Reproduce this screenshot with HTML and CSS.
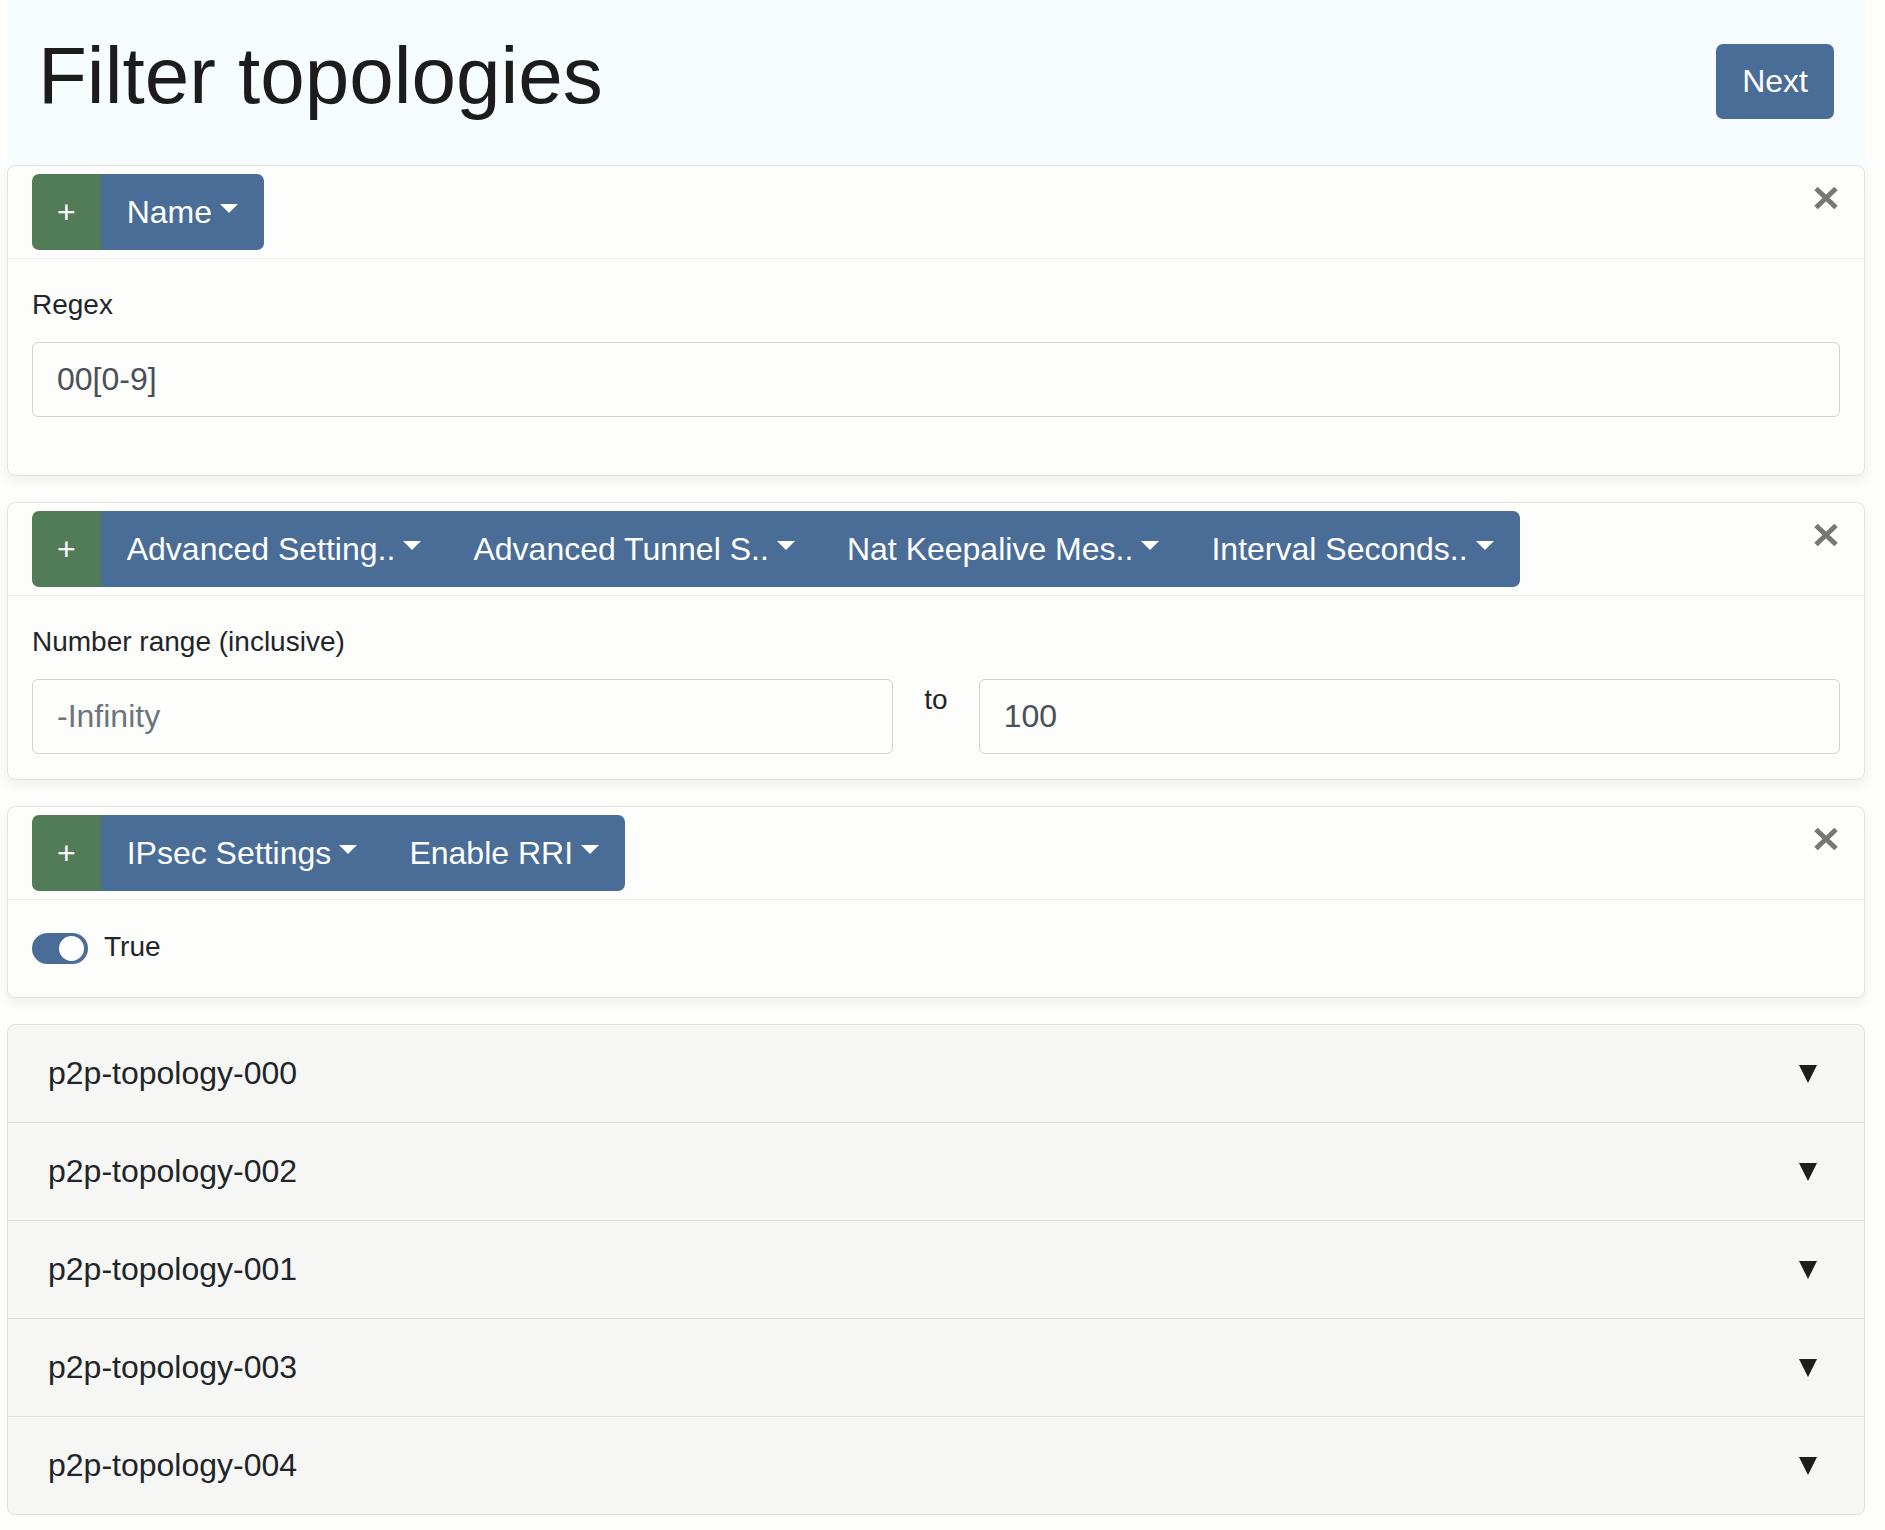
FILE: index.html
```html
<!DOCTYPE html>
<html lang="en">
<head>
<meta charset="utf-8">
<title>Filter topologies</title>
<link rel="stylesheet" href="styles.css">
</head>
<body>
<div class="page">
  <header class="header">
    <h1 class="title">Filter topologies</h1>
    <button class="next-btn">Next</button>
  </header>

  <section class="card">
    <div class="card-head">
      <div class="btn-group">
        <span class="btn btn-add">+</span>
        <span class="btn btn-dd">Name<i class="caret"></i></span>
      </div>
      <span class="close"><svg viewBox="0 0 26 24" width="26" height="24"><path d="M3 2.5 L23 21.5 M23 2.5 L3 21.5" stroke="#777" stroke-width="5" fill="none"/></svg></span>
    </div>
    <div class="card-body">
      <div class="form-group">
        <label class="label">Regex</label>
        <input class="input" type="text" value="00[0-9]">
      </div>
    </div>
  </section>

  <section class="card">
    <div class="card-head">
      <div class="btn-group">
        <span class="btn btn-add">+</span>
        <span class="btn btn-dd">Advanced Setting..<i class="caret"></i></span>
        <span class="btn btn-dd">Advanced Tunnel S..<i class="caret"></i></span>
        <span class="btn btn-dd">Nat Keepalive Mes..<i class="caret"></i></span>
        <span class="btn btn-dd">Interval Seconds..<i class="caret"></i></span>
      </div>
      <span class="close"><svg viewBox="0 0 26 24" width="26" height="24"><path d="M3 2.5 L23 21.5 M23 2.5 L3 21.5" stroke="#777" stroke-width="5" fill="none"/></svg></span>
    </div>
    <div class="card-body">
      <label class="label">Number range (inclusive)</label>
      <div class="range">
        <input class="input" type="text" placeholder="-Infinity">
        <span class="to">to</span>
        <input class="input" type="text" value="100">
      </div>
    </div>
  </section>

  <section class="card">
    <div class="card-head">
      <div class="btn-group">
        <span class="btn btn-add">+</span>
        <span class="btn btn-dd">IPsec Settings<i class="caret"></i></span>
        <span class="btn btn-dd">Enable RRI<i class="caret"></i></span>
      </div>
      <span class="close"><svg viewBox="0 0 26 24" width="26" height="24"><path d="M3 2.5 L23 21.5 M23 2.5 L3 21.5" stroke="#777" stroke-width="5" fill="none"/></svg></span>
    </div>
    <div class="card-body card-body-switch">
      <div class="switch-row">
        <span class="switch"><span class="knob"></span></span>
        <span class="switch-label">True</span>
      </div>
    </div>
  </section>

  <ul class="list">
    <li class="item"><span>p2p-topology-000</span><i class="tri"></i></li>
    <li class="item"><span>p2p-topology-002</span><i class="tri"></i></li>
    <li class="item"><span>p2p-topology-001</span><i class="tri"></i></li>
    <li class="item"><span>p2p-topology-003</span><i class="tri"></i></li>
    <li class="item"><span>p2p-topology-004</span><i class="tri"></i></li>
  </ul>
</div>
</body>
</html>
```

FILE: styles.css
```css
html, body {
  margin: 0;
  padding: 0;
  background: #fdfdfc;
}

body {
  font-family: "Liberation Sans", Arial, sans-serif;
  font-size: 28px;
  line-height: 42px;
  color: #212529;
}

.page {
  margin-left: 6px;
  width: 1861px;
}

.header {
  background: #f7fcfe;
  display: flex;
  justify-content: space-between;
  align-items: flex-start;
  padding: 27px 33px 41px 32px;
}

.title {
  margin: 0;
  font-size: 80px;
  line-height: 97px;
  font-weight: 400;
  color: #1b1c1b;
}

.next-btn {
  margin-top: 17px;
  height: 75px;
  padding: 0 26px;
  border: none;
  border-radius: 7px;
  background: #4a6d97;
  color: #fff;
  font-family: "Liberation Sans", Arial, sans-serif;
  font-size: 32px;
}

.card {
  position: relative;
  margin: 0 2px 26px 1px;
  border: 1px solid #e4e5e2;
  border-radius: 8px;
  background: #fdfdfc;
  box-shadow: 0 5px 12px rgba(0, 0, 0, 0.06);
}

.card-head {
  position: relative;
  padding: 8px 24px 8px;
  border-bottom: 1px solid #efefed;
}

.btn-group {
  display: inline-flex;
  border-radius: 7px;
  overflow: hidden;
  vertical-align: top;
}

.btn {
  display: flex;
  align-items: center;
  height: 76px;
  padding: 0 26px;
  font-size: 32px;
  line-height: 48px;
  color: #fff;
  white-space: nowrap;
}

.btn-add {
  padding: 0 25px;
  background: #527b58;
}

.btn-dd {
  background: #4a6d97;
}

.caret {
  display: inline-block;
  margin-left: 0.255em;
  margin-bottom: 0.2em;
  border-top: 0.3em solid #fff;
  border-left: 0.3em solid transparent;
  border-right: 0.3em solid transparent;
}

.close {
  position: absolute;
  top: 20px;
  right: 25px;
  width: 26px;
  height: 24px;
  line-height: 0;
}

.card-body {
  padding: 25px 24px 25px;
}

.form-group {
  margin-bottom: 33px;
}

.label {
  display: block;
  font-size: 28px;
  line-height: 42px;
  margin-bottom: 16px;
}

.input {
  display: block;
  width: 100%;
  box-sizing: border-box;
  height: 75px;
  padding: 0 24px;
  border: 1px solid #ced4da;
  border-radius: 6px;
  background: #fdfdfc;
  font-family: "Liberation Sans", Arial, sans-serif;
  font-size: 32px;
  color: #495057;
}

.input::placeholder {
  color: #6c757d;
}

.range {
  display: flex;
  align-items: flex-start;
  gap: 31px;
}

.range .input {
  flex: 1 1 0;
  min-width: 0;
}

.to {
  font-size: 28px;
  line-height: 42px;
}

.card-body-switch {
  padding: 26px 24px 29px;
}

.switch-row {
  display: flex;
  align-items: flex-start;
  height: 42px;
}

.switch {
  position: relative;
  flex: none;
  width: 56px;
  height: 31px;
  margin-top: 7px;
  margin-right: 16px;
  border-radius: 16px;
  background: #4a6d97;
}

.knob {
  position: absolute;
  top: 3px;
  right: 4px;
  width: 25px;
  height: 25px;
  border-radius: 50%;
  background: #fff;
}

.switch-label {
  font-size: 28px;
  line-height: 42px;
}

.list {
  list-style: none;
  margin: 0 2px 0 1px;
  padding: 0;
  border: 1px solid #dedfdc;
  border-radius: 8px;
  background: #f6f7f5;
  overflow: hidden;
}

.item {
  display: flex;
  justify-content: space-between;
  align-items: center;
  padding: 26px 47px 26px 40px;
  font-size: 32px;
  line-height: 45px;
  color: #212529;
}

.item + .item {
  border-top: 1px solid #dedfdc;
}

.tri {
  width: 0;
  height: 0;
  border-top: 18px solid #1e1e1e;
  border-left: 9px solid transparent;
  border-right: 9px solid transparent;
}
```
